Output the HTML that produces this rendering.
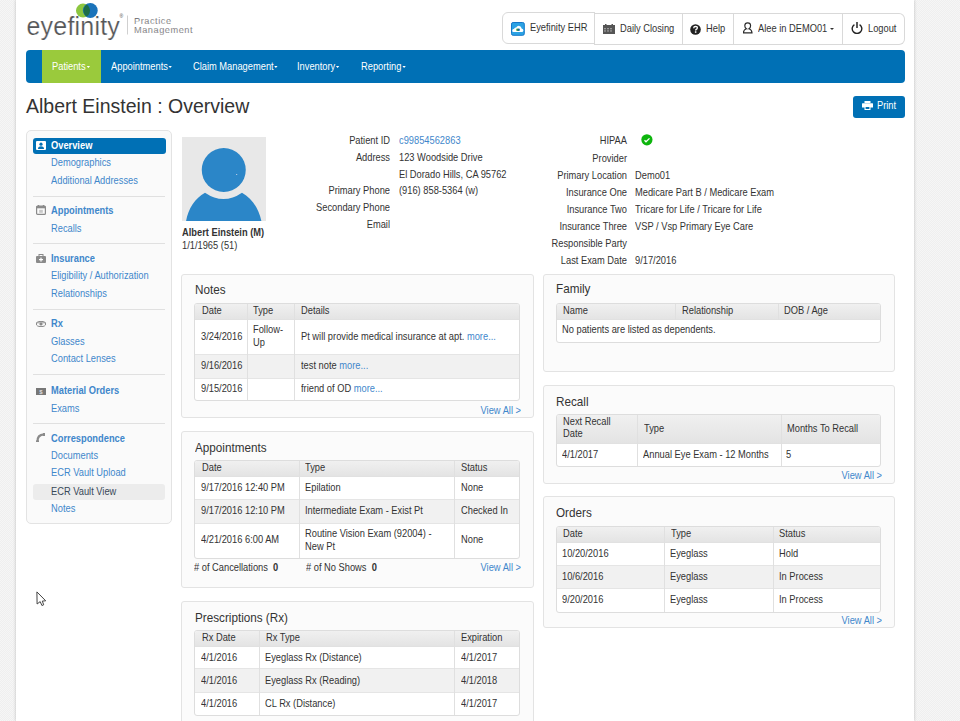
<!DOCTYPE html>
<html><head><meta charset="utf-8">
<style>
*{box-sizing:border-box}
html,body{margin:0;padding:0}
body{width:960px;height:721px;overflow:hidden;position:relative;font-family:"Liberation Sans",sans-serif;color:#333;font-size:9.3px;
background:repeating-conic-gradient(#efefef 0 25%,#f6f6f6 0 50%) 0 0/2px 2px;}
.abs{position:absolute}
.t0{position:absolute;white-space:nowrap;line-height:10px}
.tbt{font-size:11px;line-height:10px;color:#333;white-space:nowrap;transform:scaleX(0.8455);transform-origin:left}
.page{position:absolute;left:16px;top:0;width:898px;height:721px;background:#fff;box-shadow:0 0 3px rgba(0,0,0,.22)}
a,.lnk{color:#4583c4;text-decoration:none}

/* top buttons */
.tb{position:absolute;top:12px;height:32px;border:1px solid #d6d6d6;background:#fff;display:flex;align-items:center;font-size:10px;color:#333;white-space:nowrap}
/* navbar */
.nav{position:absolute;left:26px;top:50px;width:879px;height:33px;background:#0070b5;border-radius:4px;overflow:hidden}
.nav span{position:absolute;top:11px;line-height:10px;color:#fff;font-size:11px;white-space:nowrap;transform:scaleX(0.8455);transform-origin:left}
.caret{display:inline-block;width:0;height:0;border-left:2.5px solid transparent;border-right:2.5px solid transparent;border-top:2.5px solid currentColor;vertical-align:middle;margin-left:1px}

h1{position:absolute;left:26px;top:95px;margin:0;font-weight:normal;font-size:19.5px;color:#333;white-space:nowrap}
.print{position:absolute;left:853px;top:96px;width:52px;height:22px;background:#0070b5;border-radius:3px;color:#fff;font-size:9.3px}

.side{position:absolute;left:26px;top:130px;width:146px;height:392px;border:1px solid #e3e3e3;border-radius:5px;background:#fafafa}
.side div{position:absolute;white-space:nowrap}
.side .h{font-weight:bold;color:#3a7fc1;font-size:9.3px}
.side .s{color:#3a7fc1;font-size:9.3px}
.side .hr{height:1px;background:#e0e0e0;left:7px;width:131px}

.lbl{position:absolute;text-align:right;white-space:nowrap;color:#333}
.val{position:absolute;white-space:nowrap;color:#333}

.panel{position:absolute;border:1px solid #e3e3e3;border-radius:4px;background:#fafafa}
.panel .t{position:absolute;left:13px;font-size:11px;color:#333;white-space:nowrap}
table{border-collapse:separate;border-spacing:0;position:absolute;font-size:9.3px;color:#333;background:#fff;border:1px solid #ddd;border-radius:3px}
</style></head><body>
<div class="page"></div>

<!-- logo -->
<svg class="abs" style="left:0;top:0" width="220" height="48">
 <circle cx="83" cy="10.6" r="7" fill="#8cc63f"/>
 <circle cx="90.3" cy="10.5" r="7.4" fill="#1a73ba"/>
 <path d="M86.6,4.6 A7,7 0 0 1 86.6,16.6 A7.4,7.4 0 0 1 86.6,4.6Z" fill="#1d6e47"/>
 <line x1="127.5" y1="15.5" x2="127.5" y2="34.5" stroke="#d0d0d0" stroke-width="1"/>
</svg>
<div class="abs" style="left:26.5px;top:11.5px;font-size:25px;color:#555658;letter-spacing:0.2px;-webkit-text-stroke:0.2px #fff;white-space:nowrap">eyefinity</div>
<div class="abs" style="left:119.5px;top:13px;font-size:5px;color:#444">&reg;</div>
<div class="abs" style="left:134px;top:16.5px;font-size:9.2px;line-height:9.5px;color:#606062;letter-spacing:0.55px;-webkit-text-stroke:0.15px #fff;white-space:nowrap">Practice<br>Management</div>

<!-- top buttons -->
<div class="abs" style="left:502px;top:12px;width:93px;height:32px;border:1px solid #d9d9d9;border-radius:6px 0 0 6px;background:#fff"></div>
<div class="abs" style="left:594px;top:13px;width:311px;height:32px;border:1px solid #d9d9d9;border-left:none;border-radius:0 6px 6px 0;background:#fff"></div>
<div class="abs" style="left:594px;top:12px;width:1px;height:33px;background:#d9d9d9"></div>
<div class="abs" style="left:682px;top:13px;width:1px;height:32px;background:#d9d9d9"></div>
<div class="abs" style="left:733px;top:13px;width:1px;height:32px;background:#d9d9d9"></div>
<div class="abs" style="left:842px;top:13px;width:1px;height:32px;background:#d9d9d9"></div>
<svg class="abs" style="left:510.5px;top:21.5px" width="14" height="14" viewBox="0 0 14 14">
 <rect x="0.5" y="0.5" width="12.8" height="12.8" rx="1.6" fill="#2ba2e4" stroke="#1577c9" stroke-width="1"/>
 <path d="M2.6,10 Q1,9.9 1.2,8.4 Q1.5,7 3,7.1 Q3.4,5.2 5.2,5.4 Q6.2,3.6 8.4,3.9 Q10.3,4.2 10.6,6.5 Q12.5,6.8 12.4,8.5 Q12.2,10 10.9,10Z" fill="#fff"/>
 <circle cx="6.3" cy="7.8" r="1.3" fill="#6cc04a"/><circle cx="7.7" cy="7.8" r="1.3" fill="#1c74c4"/>
 <path d="M7,6.7 A1.3,1.3 0 0 1 7,8.9 A1.3,1.3 0 0 1 7,6.7Z" fill="#1a6a3a"/>
</svg>
<div class="abs tbt" style="left:529.5px;top:21.5px">Eyefinity EHR</div>
<svg class="abs" style="left:603px;top:24px" width="12" height="10" viewBox="0 0 12 10">
 <rect x="0" y="1" width="12" height="9" fill="#555"/>
 <rect x="2" y="0" width="1.5" height="2" fill="#555"/><rect x="8.5" y="0" width="1.5" height="2" fill="#555"/>
 <g fill="#999"><rect x="1" y="4" width="2" height="1.3"/><rect x="4" y="4" width="2" height="1.3"/><rect x="7" y="4" width="2" height="1.3"/><rect x="1" y="6.3" width="2" height="1.3"/><rect x="4" y="6.3" width="2" height="1.3"/><rect x="7" y="6.3" width="2" height="1.3"/></g>
</svg>
<div class="abs tbt" style="left:620px;top:23px">Daily Closing</div>
<svg class="abs" style="left:690px;top:23.5px" width="11" height="11" viewBox="0 0 11 11">
 <circle cx="5.5" cy="5.5" r="5.3" fill="#222"/>
 <path d="M3.7,4.2 Q3.8,2.4 5.6,2.4 Q7.4,2.5 7.3,4 Q7.2,4.9 6.2,5.4 Q5.7,5.7 5.7,6.5" stroke="#fff" stroke-width="1.4" fill="none"/>
 <rect x="4.9" y="7.3" width="1.5" height="1.5" fill="#fff"/>
</svg>
<div class="abs tbt" style="left:706px;top:23px">Help</div>
<svg class="abs" style="left:743px;top:22px" width="10" height="12" viewBox="0 0 10 12">
 <path d="M4.7,0.8 C6.5,0.8 7.6,2.1 7.6,3.7 C7.6,5.2 6.9,6.2 6,6.8 C7.9,7.4 8.9,8.8 9,10.8 L0.4,10.8 C0.5,8.8 1.5,7.4 3.4,6.8 C2.5,6.2 1.8,5.2 1.8,3.7 C1.8,2.1 2.9,0.8 4.7,0.8Z" fill="none" stroke="#2a2a2a" stroke-width="1.15"/>
</svg>
<div class="abs tbt" style="left:758px;top:23px">Alee in DEMO01</div>
<div class="abs" style="left:829.5px;top:28px;width:0;height:0;border-left:2.5px solid transparent;border-right:2.5px solid transparent;border-top:2.8px solid #333"></div>
<svg class="abs" style="left:850.5px;top:21px" width="12" height="13" viewBox="0 0 12 13">
 <path d="M3.4,3.6 A4.8,4.8 0 1 0 8.6,3.6" fill="none" stroke="#222" stroke-width="1.4"/>
 <line x1="6" y1="0.9" x2="6" y2="6.9" stroke="#222" stroke-width="1.5"/>
</svg>
<div class="abs tbt" style="left:867.5px;top:23px">Logout</div>

<!-- navbar -->
<div class="nav">
 <div class="abs" style="left:16px;top:0;width:59px;height:33px;background:#9aca3c"></div>
 <span style="left:26px">Patients<i class="caret"></i></span>
 <span style="left:84.5px">Appointments<i class="caret"></i></span>
 <span style="left:166.5px">Claim Management<i class="caret"></i></span>
 <span style="left:271px">Inventory<i class="caret"></i></span>
 <span style="left:334.5px">Reporting<i class="caret"></i></span>
</div>

<h1>Albert Einstein : Overview</h1>
<div class="print">
 <svg class="abs" style="left:8.5px;top:5px" width="11" height="9" viewBox="0 0 11 9">
  <rect x="2.5" y="0" width="6" height="2" fill="#fff"/>
  <path d="M0,2.8 Q0,2.3 0.5,2.3 L10.5,2.3 Q11,2.3 11,2.8 L11,6.5 L0,6.5Z" fill="#fff"/>
  <rect x="2.5" y="5" width="6" height="4" fill="#fff"/>
  <rect x="3.6" y="6" width="3.8" height="2" fill="#0070b5"/>
 </svg>
 <div class="abs" style="left:24px;top:4px;font-size:11px;line-height:10px;color:#fff;transform:scaleX(0.8455);transform-origin:left">Print</div>
</div>

<div class="abs" style="left:26px;top:130px;width:146px;height:394px;border:1px solid #e3e3e3;border-radius:5px;background:#fafafa"></div>
<div class="abs" style="left:33px;top:137.5px;width:132.5px;height:16.0px;background:#0070b5;border-radius:3px"></div>
<svg class="abs" style="left:36px;top:141px" width="10" height="9" viewBox="0 0 10 9"><rect x="0" y="0" width="10" height="9" rx="1" fill="#fff"/><circle cx="5" cy="3.2" r="1.6" fill="#0070b5"/><path d="M2,8 Q2,5.2 5,5.2 Q8,5.2 8,8Z" fill="#0070b5"/></svg>
<div class="t0" style="left:51px;top:139.7px;font-size:11px;font-weight:700;color:#fff;transform:scaleX(0.8455);transform-origin:left;">Overview</div>
<div class="t0" style="left:51px;top:157px;font-size:11px;font-weight:400;color:#3f87cb;transform:scaleX(0.8455);transform-origin:left;">Demographics</div>
<div class="t0" style="left:51px;top:174.9px;font-size:11px;font-weight:400;color:#3f87cb;transform:scaleX(0.8455);transform-origin:left;">Additional Addresses</div>
<div class="abs" style="left:33px;top:196px;width:132px;height:1px;background:#e0e0e0"></div>
<svg class="abs" style="left:36px;top:205px" width="10" height="10" viewBox="0 0 10 10"><rect x="0.6" y="1.1" width="8.8" height="8.3" rx="1" fill="none" stroke="#8a8a8a" stroke-width="1.2"/><rect x="0.6" y="1.1" width="8.8" height="2.2" fill="#8a8a8a"/><rect x="1.8" y="0" width="1.4" height="2" fill="#8a8a8a"/><rect x="6.8" y="0" width="1.4" height="2" fill="#8a8a8a"/><rect x="3.2" y="4.8" width="3.6" height="3" fill="#c8c8c8"/></svg>
<div class="t0" style="left:51px;top:204.7px;font-size:11px;font-weight:700;color:#3f87cb;transform:scaleX(0.8455);transform-origin:left;">Appointments</div>
<div class="t0" style="left:51px;top:222.7px;font-size:11px;font-weight:400;color:#3f87cb;transform:scaleX(0.8455);transform-origin:left;">Recalls</div>
<div class="abs" style="left:33px;top:243px;width:132px;height:1px;background:#e0e0e0"></div>
<svg class="abs" style="left:36px;top:253.5px" width="10" height="9" viewBox="0 0 10 9"><rect x="3" y="0.5" width="4" height="2.5" fill="none" stroke="#8a8a8a" stroke-width="1"/><rect x="0" y="2" width="10" height="7" rx="1" fill="#8a8a8a"/><rect x="4.4" y="3.6" width="1.2" height="4" fill="#fff"/><rect x="3" y="5" width="4" height="1.2" fill="#fff"/></svg>
<div class="t0" style="left:51px;top:252.7px;font-size:11px;font-weight:700;color:#3f87cb;transform:scaleX(0.8455);transform-origin:left;">Insurance</div>
<div class="t0" style="left:51px;top:270.2px;font-size:11px;font-weight:400;color:#3f87cb;transform:scaleX(0.8455);transform-origin:left;">Eligibility / Authorization</div>
<div class="t0" style="left:51px;top:288px;font-size:11px;font-weight:400;color:#3f87cb;transform:scaleX(0.8455);transform-origin:left;">Relationships</div>
<div class="abs" style="left:33px;top:308.5px;width:132px;height:1.0px;background:#e0e0e0"></div>
<svg class="abs" style="left:36px;top:320.5px" width="10" height="6" viewBox="0 0 10 6"><ellipse cx="5" cy="3" rx="4.6" ry="2.6" fill="none" stroke="#8a8a8a" stroke-width="1"/><circle cx="5" cy="3" r="1.6" fill="#8a8a8a"/><line x1="0" y1="1.8" x2="10" y2="1.8" stroke="#8a8a8a" stroke-width="0.8"/></svg>
<div class="t0" style="left:51px;top:318px;font-size:11px;font-weight:700;color:#3f87cb;transform:scaleX(0.8455);transform-origin:left;">Rx</div>
<div class="t0" style="left:51px;top:336px;font-size:11px;font-weight:400;color:#3f87cb;transform:scaleX(0.8455);transform-origin:left;">Glasses</div>
<div class="t0" style="left:51px;top:353.2px;font-size:11px;font-weight:400;color:#3f87cb;transform:scaleX(0.8455);transform-origin:left;">Contact Lenses</div>
<div class="abs" style="left:33px;top:374px;width:132px;height:1px;background:#e0e0e0"></div>
<svg class="abs" style="left:36px;top:387.5px" width="10" height="7" viewBox="0 0 10 7"><rect x="0" y="0" width="10" height="7" fill="#777"/><text x="5" y="6" font-size="6" fill="#ddd" text-anchor="middle" font-family="Liberation Sans" font-weight="bold">$</text></svg>
<div class="t0" style="left:51px;top:385.4px;font-size:11px;font-weight:700;color:#3f87cb;transform:scaleX(0.8455);transform-origin:left;">Material Orders</div>
<div class="t0" style="left:51px;top:403px;font-size:11px;font-weight:400;color:#3f87cb;transform:scaleX(0.8455);transform-origin:left;">Exams</div>
<div class="abs" style="left:33px;top:422.5px;width:132px;height:1.0px;background:#e0e0e0"></div>
<svg class="abs" style="left:36px;top:432.7px" width="9" height="9" viewBox="0 0 9 9"><path d="M1.5,8.6 Q1.2,1.8 8,1.4" fill="none" stroke="#8a8a8a" stroke-width="2.2"/><rect x="0" y="7.4" width="3" height="2" fill="#8a8a8a"/><rect x="7" y="0" width="2" height="3" fill="#8a8a8a"/></svg>
<div class="t0" style="left:51px;top:432.7px;font-size:11px;font-weight:700;color:#3f87cb;transform:scaleX(0.8455);transform-origin:left;">Correspondence</div>
<div class="t0" style="left:51px;top:450.2px;font-size:11px;font-weight:400;color:#3f87cb;transform:scaleX(0.8455);transform-origin:left;">Documents</div>
<div class="t0" style="left:51px;top:467.2px;font-size:11px;font-weight:400;color:#3f87cb;transform:scaleX(0.8455);transform-origin:left;">ECR Vault Upload</div>
<div class="abs" style="left:33px;top:484px;width:132px;height:15.699999999999989px;background:#ececec;border-radius:3px"></div>
<div class="t0" style="left:51px;top:486px;font-size:11px;font-weight:400;color:#384858;transform:scaleX(0.8455);transform-origin:left;">ECR Vault View</div>
<div class="t0" style="left:51px;top:503px;font-size:11px;font-weight:400;color:#3f87cb;transform:scaleX(0.8455);transform-origin:left;">Notes</div>
<svg class="abs" style="left:182px;top:137px" width="84" height="84" viewBox="0 0 84 84"><rect width="84" height="84" fill="#e8e8e8"/><circle cx="41.75" cy="33" r="22" fill="#2b86c8"/><path d="M4,84.5 C6,72 13,61 23,55.7 Q41.5,68.3 60,55.7 C70,61 77,72 79.5,84.5Z" fill="#2b86c8"/><circle cx="54.7" cy="37.5" r="0.6" fill="#dde"/></svg>
<div class="t0" style="left:182px;top:227.4px;font-size:11px;font-weight:700;color:#333;transform:scaleX(0.8455);transform-origin:left;">Albert Einstein (M)</div>
<div class="t0" style="left:182px;top:239.7px;font-size:11px;font-weight:400;color:#333;transform:scaleX(0.8455);transform-origin:left;">1/1/1965 (51)</div>
<div class="t0" style="left:-10.5px;width:400px;text-align:right;top:135.0px;font-size:11px;font-weight:400;color:#333;transform:scaleX(0.8455);transform-origin:right;">Patient ID</div>
<div class="t0" style="left:399px;top:135.0px;font-size:11px;font-weight:400;color:#333;transform:scaleX(0.8455);transform-origin:left;"><span style="color:#3f87cb">c99854562863</span></div>
<div class="t0" style="left:-10.5px;width:400px;text-align:right;top:151.75px;font-size:11px;font-weight:400;color:#333;transform:scaleX(0.8455);transform-origin:right;">Address</div>
<div class="t0" style="left:399px;top:151.75px;font-size:11px;font-weight:400;color:#333;transform:scaleX(0.8455);transform-origin:left;">123 Woodside Drive</div>
<div class="t0" style="left:399px;top:168.5px;font-size:11px;font-weight:400;color:#333;transform:scaleX(0.8455);transform-origin:left;">El Dorado Hills, CA 95762</div>
<div class="t0" style="left:-10.5px;width:400px;text-align:right;top:185.25px;font-size:11px;font-weight:400;color:#333;transform:scaleX(0.8455);transform-origin:right;">Primary Phone</div>
<div class="t0" style="left:399px;top:185.25px;font-size:11px;font-weight:400;color:#333;transform:scaleX(0.8455);transform-origin:left;">(916) 858-5364 (w)</div>
<div class="t0" style="left:-10.5px;width:400px;text-align:right;top:202.0px;font-size:11px;font-weight:400;color:#333;transform:scaleX(0.8455);transform-origin:right;">Secondary Phone</div>
<div class="t0" style="left:-10.5px;width:400px;text-align:right;top:218.75px;font-size:11px;font-weight:400;color:#333;transform:scaleX(0.8455);transform-origin:right;">Email</div>
<div class="t0" style="left:226.5px;width:400px;text-align:right;top:134.8px;font-size:11px;font-weight:400;color:#333;transform:scaleX(0.8455);transform-origin:right;">HIPAA</div>
<div class="t0" style="left:226.5px;width:400px;text-align:right;top:153px;font-size:11px;font-weight:400;color:#333;transform:scaleX(0.8455);transform-origin:right;">Provider</div>
<div class="t0" style="left:226.5px;width:400px;text-align:right;top:170.2px;font-size:11px;font-weight:400;color:#333;transform:scaleX(0.8455);transform-origin:right;">Primary Location</div>
<div class="t0" style="left:635.2px;top:170.2px;font-size:11px;font-weight:400;color:#333;transform:scaleX(0.8455);transform-origin:left;">Demo01</div>
<div class="t0" style="left:226.5px;width:400px;text-align:right;top:187.3px;font-size:11px;font-weight:400;color:#333;transform:scaleX(0.8455);transform-origin:right;">Insurance One</div>
<div class="t0" style="left:635.2px;top:187.3px;font-size:11px;font-weight:400;color:#333;transform:scaleX(0.8455);transform-origin:left;">Medicare Part B / Medicare Exam</div>
<div class="t0" style="left:226.5px;width:400px;text-align:right;top:203.9px;font-size:11px;font-weight:400;color:#333;transform:scaleX(0.8455);transform-origin:right;">Insurance Two</div>
<div class="t0" style="left:635.2px;top:203.9px;font-size:11px;font-weight:400;color:#333;transform:scaleX(0.8455);transform-origin:left;">Tricare for Life / Tricare for Life</div>
<div class="t0" style="left:226.5px;width:400px;text-align:right;top:220.8px;font-size:11px;font-weight:400;color:#333;transform:scaleX(0.8455);transform-origin:right;">Insurance Three</div>
<div class="t0" style="left:635.2px;top:220.8px;font-size:11px;font-weight:400;color:#333;transform:scaleX(0.8455);transform-origin:left;">VSP / Vsp Primary Eye Care</div>
<div class="t0" style="left:226.5px;width:400px;text-align:right;top:237.8px;font-size:11px;font-weight:400;color:#333;transform:scaleX(0.8455);transform-origin:right;">Responsible Party</div>
<div class="t0" style="left:226.5px;width:400px;text-align:right;top:254.8px;font-size:11px;font-weight:400;color:#333;transform:scaleX(0.8455);transform-origin:right;">Last Exam Date</div>
<div class="t0" style="left:635.2px;top:254.8px;font-size:11px;font-weight:400;color:#333;transform:scaleX(0.8455);transform-origin:left;">9/17/2016</div>
<svg class="abs" style="left:640.5px;top:134px" width="12" height="12" viewBox="0 0 12 12"><circle cx="5.9" cy="5.8" r="5.6" fill="#0db50d"/><path d="M3.5,6.2 L5,7.8 L8.5,4.4" fill="none" stroke="#fff" stroke-width="1.3"/></svg>
<div class="abs" style="left:181px;top:274px;width:353px;height:144px;border:1px solid #e3e3e3;border-radius:3px;background:#fbfbfb"></div>
<div class="t0" style="left:195px;top:285px;font-size:12.4px;font-weight:400;color:#333;transform:scaleX(0.944);transform-origin:left;">Notes</div>
<div class="abs" style="left:194px;top:303px;width:326px;height:98px;border:1px solid #ddd;border-radius:3px;background:#fff;overflow:hidden"></div>
<div class="abs" style="left:195px;top:304px;width:324px;height:16px;background:linear-gradient(#f0f0f0,#e3e3e3);border-radius:2px 2px 0 0"></div>
<div class="abs" style="left:195px;top:353.5px;width:324px;height:1.0px;background:#e5e5e5"></div>
<div class="abs" style="left:195px;top:354.5px;width:324px;height:24.0px;background:#f1f1f1"></div>
<div class="abs" style="left:195px;top:377.5px;width:324px;height:1.0px;background:#e5e5e5"></div>
<div class="abs" style="left:195px;top:319px;width:324px;height:1px;background:#e1e1e1"></div>
<div class="abs" style="left:247px;top:304px;width:1px;height:96px;background:#e0e0e0"></div>
<div class="abs" style="left:294px;top:304px;width:1px;height:96px;background:#e0e0e0"></div>
<div class="t0" style="left:201.5px;top:305px;font-size:11px;font-weight:400;color:#333;transform:scaleX(0.8455);transform-origin:left;">Date</div>
<div class="t0" style="left:253px;top:305px;font-size:11px;font-weight:400;color:#333;transform:scaleX(0.8455);transform-origin:left;">Type</div>
<div class="t0" style="left:300.5px;top:305px;font-size:11px;font-weight:400;color:#333;transform:scaleX(0.8455);transform-origin:left;">Details</div>
<div class="t0" style="left:200.5px;top:330.6px;font-size:11px;font-weight:400;color:#333;transform:scaleX(0.8455);transform-origin:left;">3/24/2016</div>
<div class="t0" style="left:253px;top:324.3px;font-size:11px;font-weight:400;color:#333;transform:scaleX(0.8455);transform-origin:left;">Follow-</div>
<div class="t0" style="left:253px;top:336.8px;font-size:11px;font-weight:400;color:#333;transform:scaleX(0.8455);transform-origin:left;">Up</div>
<div class="t0" style="left:300.5px;top:330.6px;font-size:11px;font-weight:400;color:#333;transform:scaleX(0.8455);transform-origin:left;">Pt will provide medical insurance at apt. <span style="color:#3f87cb">more...</span></div>
<div class="t0" style="left:200.5px;top:360px;font-size:11px;font-weight:400;color:#333;transform:scaleX(0.8455);transform-origin:left;">9/16/2016</div>
<div class="t0" style="left:300.5px;top:360px;font-size:11px;font-weight:400;color:#333;transform:scaleX(0.8455);transform-origin:left;">test note <span style="color:#3f87cb">more...</span></div>
<div class="t0" style="left:200.5px;top:383.4px;font-size:11px;font-weight:400;color:#333;transform:scaleX(0.8455);transform-origin:left;">9/15/2016</div>
<div class="t0" style="left:300.5px;top:383.4px;font-size:11px;font-weight:400;color:#333;transform:scaleX(0.8455);transform-origin:left;">friend of OD <span style="color:#3f87cb">more...</span></div>
<div class="t0" style="left:121px;width:400px;text-align:right;top:404.7px;font-size:11px;font-weight:400;color:#3f87cb;transform:scaleX(0.8455);transform-origin:right;">View All &gt;</div>
<div class="abs" style="left:181px;top:431px;width:353px;height:157px;border:1px solid #e3e3e3;border-radius:3px;background:#fbfbfb"></div>
<div class="t0" style="left:195px;top:442.6px;font-size:12.4px;font-weight:400;color:#333;transform:scaleX(0.944);transform-origin:left;">Appointments</div>
<div class="abs" style="left:194px;top:460px;width:326px;height:99px;border:1px solid #ddd;border-radius:3px;background:#fff;overflow:hidden"></div>
<div class="abs" style="left:195px;top:461px;width:324px;height:16px;background:linear-gradient(#f0f0f0,#e3e3e3);border-radius:2px 2px 0 0"></div>
<div class="abs" style="left:195px;top:499px;width:324px;height:1px;background:#e5e5e5"></div>
<div class="abs" style="left:195px;top:500px;width:324px;height:24px;background:#f1f1f1"></div>
<div class="abs" style="left:195px;top:523px;width:324px;height:1px;background:#e5e5e5"></div>
<div class="abs" style="left:195px;top:476px;width:324px;height:1px;background:#e1e1e1"></div>
<div class="abs" style="left:299px;top:461px;width:1px;height:97px;background:#e0e0e0"></div>
<div class="abs" style="left:454px;top:461px;width:1px;height:97px;background:#e0e0e0"></div>
<div class="t0" style="left:201.5px;top:461.6px;font-size:11px;font-weight:400;color:#333;transform:scaleX(0.8455);transform-origin:left;">Date</div>
<div class="t0" style="left:305px;top:461.6px;font-size:11px;font-weight:400;color:#333;transform:scaleX(0.8455);transform-origin:left;">Type</div>
<div class="t0" style="left:461px;top:461.6px;font-size:11px;font-weight:400;color:#333;transform:scaleX(0.8455);transform-origin:left;">Status</div>
<div class="t0" style="left:200.5px;top:482px;font-size:11px;font-weight:400;color:#333;transform:scaleX(0.8455);transform-origin:left;">9/17/2016 12:40 PM</div>
<div class="t0" style="left:304.7px;top:482px;font-size:11px;font-weight:400;color:#333;transform:scaleX(0.8455);transform-origin:left;">Epilation</div>
<div class="t0" style="left:461px;top:482px;font-size:11px;font-weight:400;color:#333;transform:scaleX(0.8455);transform-origin:left;">None</div>
<div class="t0" style="left:200.5px;top:504.6px;font-size:11px;font-weight:400;color:#333;transform:scaleX(0.8455);transform-origin:left;">9/17/2016 12:10 PM</div>
<div class="t0" style="left:304.7px;top:504.6px;font-size:11px;font-weight:400;color:#333;transform:scaleX(0.8455);transform-origin:left;">Intermediate Exam - Exist Pt</div>
<div class="t0" style="left:461px;top:504.6px;font-size:11px;font-weight:400;color:#333;transform:scaleX(0.8455);transform-origin:left;">Checked In</div>
<div class="t0" style="left:200.5px;top:533.9px;font-size:11px;font-weight:400;color:#333;transform:scaleX(0.8455);transform-origin:left;">4/21/2016 6:00 AM</div>
<div class="t0" style="left:304.7px;top:528px;font-size:11px;font-weight:400;color:#333;transform:scaleX(0.8455);transform-origin:left;">Routine Vision Exam (92004) -</div>
<div class="t0" style="left:304.7px;top:540.7px;font-size:11px;font-weight:400;color:#333;transform:scaleX(0.8455);transform-origin:left;">New Pt</div>
<div class="t0" style="left:461px;top:533.9px;font-size:11px;font-weight:400;color:#333;transform:scaleX(0.8455);transform-origin:left;">None</div>
<div class="t0" style="left:194px;top:562.4px;font-size:11px;font-weight:400;color:#333;transform:scaleX(0.8455);transform-origin:left;"># of Cancellations&nbsp;&nbsp;<b>0</b></div>
<div class="t0" style="left:306px;top:562.4px;font-size:11px;font-weight:400;color:#333;transform:scaleX(0.8455);transform-origin:left;"># of No Shows&nbsp;&nbsp;<b>0</b></div>
<div class="t0" style="left:121px;width:400px;text-align:right;top:562.4px;font-size:11px;font-weight:400;color:#3f87cb;transform:scaleX(0.8455);transform-origin:right;">View All &gt;</div>
<div class="abs" style="left:181px;top:601px;width:353px;height:139px;border:1px solid #e3e3e3;border-radius:3px;background:#fbfbfb"></div>
<div class="t0" style="left:195px;top:612.6px;font-size:12.4px;font-weight:400;color:#333;transform:scaleX(0.944);transform-origin:left;">Prescriptions (Rx)</div>
<div class="abs" style="left:194px;top:630px;width:326px;height:86px;border:1px solid #ddd;border-radius:3px;background:#fff;overflow:hidden"></div>
<div class="abs" style="left:195px;top:631px;width:324px;height:16px;background:linear-gradient(#f0f0f0,#e3e3e3);border-radius:2px 2px 0 0"></div>
<div class="abs" style="left:195px;top:668px;width:324px;height:1px;background:#e5e5e5"></div>
<div class="abs" style="left:195px;top:669px;width:324px;height:24px;background:#f1f1f1"></div>
<div class="abs" style="left:195px;top:692px;width:324px;height:1px;background:#e5e5e5"></div>
<div class="abs" style="left:195px;top:646px;width:324px;height:1px;background:#e1e1e1"></div>
<div class="abs" style="left:259px;top:631px;width:1px;height:84px;background:#e0e0e0"></div>
<div class="abs" style="left:454px;top:631px;width:1px;height:84px;background:#e0e0e0"></div>
<div class="t0" style="left:201.5px;top:631.6px;font-size:11px;font-weight:400;color:#333;transform:scaleX(0.8455);transform-origin:left;">Rx Date</div>
<div class="t0" style="left:265.5px;top:631.6px;font-size:11px;font-weight:400;color:#333;transform:scaleX(0.8455);transform-origin:left;">Rx Type</div>
<div class="t0" style="left:461px;top:631.6px;font-size:11px;font-weight:400;color:#333;transform:scaleX(0.8455);transform-origin:left;">Expiration</div>
<div class="t0" style="left:200.5px;top:652px;font-size:11px;font-weight:400;color:#333;transform:scaleX(0.8455);transform-origin:left;">4/1/2016</div>
<div class="t0" style="left:265px;top:652px;font-size:11px;font-weight:400;color:#333;transform:scaleX(0.8455);transform-origin:left;">Eyeglass Rx (Distance)</div>
<div class="t0" style="left:461px;top:652px;font-size:11px;font-weight:400;color:#333;transform:scaleX(0.8455);transform-origin:left;">4/1/2017</div>
<div class="t0" style="left:200.5px;top:674.6px;font-size:11px;font-weight:400;color:#333;transform:scaleX(0.8455);transform-origin:left;">4/1/2016</div>
<div class="t0" style="left:265px;top:674.6px;font-size:11px;font-weight:400;color:#333;transform:scaleX(0.8455);transform-origin:left;">Eyeglass Rx (Reading)</div>
<div class="t0" style="left:461px;top:674.6px;font-size:11px;font-weight:400;color:#333;transform:scaleX(0.8455);transform-origin:left;">4/1/2018</div>
<div class="t0" style="left:200.5px;top:698px;font-size:11px;font-weight:400;color:#333;transform:scaleX(0.8455);transform-origin:left;">4/1/2016</div>
<div class="t0" style="left:265px;top:698px;font-size:11px;font-weight:400;color:#333;transform:scaleX(0.8455);transform-origin:left;">CL Rx (Distance)</div>
<div class="t0" style="left:461px;top:698px;font-size:11px;font-weight:400;color:#333;transform:scaleX(0.8455);transform-origin:left;">4/1/2017</div>
<div class="abs" style="left:543px;top:274px;width:352px;height:98px;border:1px solid #e3e3e3;border-radius:3px;background:#fbfbfb"></div>
<div class="t0" style="left:556px;top:284.4px;font-size:12.4px;font-weight:400;color:#333;transform:scaleX(0.944);transform-origin:left;">Family</div>
<div class="abs" style="left:556px;top:303px;width:325px;height:39.5px;border:1px solid #ddd;border-radius:3px;background:#fff;overflow:hidden"></div>
<div class="abs" style="left:557px;top:304px;width:323px;height:15.5px;background:linear-gradient(#f0f0f0,#e3e3e3);border-radius:2px 2px 0 0"></div>
<div class="abs" style="left:557px;top:318.5px;width:323px;height:1.0px;background:#e1e1e1"></div>
<div class="abs" style="left:674.5px;top:304px;width:1.0px;height:15.5px;background:#e0e0e0"></div>
<div class="abs" style="left:777.5px;top:304px;width:1.0px;height:15.5px;background:#e0e0e0"></div>
<div class="t0" style="left:563.3px;top:305px;font-size:11px;font-weight:400;color:#333;transform:scaleX(0.8455);transform-origin:left;">Name</div>
<div class="t0" style="left:681.7px;top:305px;font-size:11px;font-weight:400;color:#333;transform:scaleX(0.8455);transform-origin:left;">Relationship</div>
<div class="t0" style="left:784.2px;top:305px;font-size:11px;font-weight:400;color:#333;transform:scaleX(0.8455);transform-origin:left;">DOB / Age</div>
<div class="t0" style="left:561.8px;top:324px;font-size:11px;font-weight:400;color:#333;transform:scaleX(0.8455);transform-origin:left;">No patients are listed as dependents.</div>
<div class="abs" style="left:543px;top:385px;width:352px;height:99px;border:1px solid #e3e3e3;border-radius:3px;background:#fbfbfb"></div>
<div class="t0" style="left:556px;top:397px;font-size:12.4px;font-weight:400;color:#333;transform:scaleX(0.944);transform-origin:left;">Recall</div>
<div class="abs" style="left:556px;top:414px;width:325px;height:53px;border:1px solid #ddd;border-radius:3px;background:#fff;overflow:hidden"></div>
<div class="abs" style="left:557px;top:415px;width:323px;height:28.5px;background:linear-gradient(#f0f0f0,#e3e3e3);border-radius:2px 2px 0 0"></div>
<div class="abs" style="left:557px;top:442.5px;width:323px;height:1.0px;background:#e1e1e1"></div>
<div class="abs" style="left:636.5px;top:415px;width:1.0px;height:51px;background:#e0e0e0"></div>
<div class="abs" style="left:780.5px;top:415px;width:1.0px;height:51px;background:#e0e0e0"></div>
<div class="t0" style="left:563.3px;top:416px;font-size:11px;font-weight:400;color:#333;transform:scaleX(0.8455);transform-origin:left;">Next Recall</div>
<div class="t0" style="left:563.3px;top:428.4px;font-size:11px;font-weight:400;color:#333;transform:scaleX(0.8455);transform-origin:left;">Date</div>
<div class="t0" style="left:644px;top:422.8px;font-size:11px;font-weight:400;color:#333;transform:scaleX(0.8455);transform-origin:left;">Type</div>
<div class="t0" style="left:787.2px;top:422.8px;font-size:11px;font-weight:400;color:#333;transform:scaleX(0.8455);transform-origin:left;">Months To Recall</div>
<div class="t0" style="left:561.8px;top:448.8px;font-size:11px;font-weight:400;color:#333;transform:scaleX(0.8455);transform-origin:left;">4/1/2017</div>
<div class="t0" style="left:642.5px;top:448.8px;font-size:11px;font-weight:400;color:#333;transform:scaleX(0.8455);transform-origin:left;">Annual Eye Exam - 12 Months</div>
<div class="t0" style="left:785.7px;top:448.8px;font-size:11px;font-weight:400;color:#333;transform:scaleX(0.8455);transform-origin:left;">5</div>
<div class="t0" style="left:482px;width:400px;text-align:right;top:469.5px;font-size:11px;font-weight:400;color:#3f87cb;transform:scaleX(0.8455);transform-origin:right;">View All &gt;</div>
<div class="abs" style="left:543px;top:496px;width:352px;height:132px;border:1px solid #e3e3e3;border-radius:3px;background:#fbfbfb"></div>
<div class="t0" style="left:556px;top:508px;font-size:12.4px;font-weight:400;color:#333;transform:scaleX(0.944);transform-origin:left;">Orders</div>
<div class="abs" style="left:556px;top:526px;width:325px;height:87px;border:1px solid #ddd;border-radius:3px;background:#fff;overflow:hidden"></div>
<div class="abs" style="left:557px;top:527px;width:323px;height:15.5px;background:linear-gradient(#f0f0f0,#e3e3e3);border-radius:2px 2px 0 0"></div>
<div class="abs" style="left:557px;top:565px;width:323px;height:1px;background:#e5e5e5"></div>
<div class="abs" style="left:557px;top:566px;width:323px;height:23px;background:#f1f1f1"></div>
<div class="abs" style="left:557px;top:588px;width:323px;height:1px;background:#e5e5e5"></div>
<div class="abs" style="left:557px;top:541.5px;width:323px;height:1.0px;background:#e1e1e1"></div>
<div class="abs" style="left:663.5px;top:527px;width:1.0px;height:85px;background:#e0e0e0"></div>
<div class="abs" style="left:772.5px;top:527px;width:1.0px;height:85px;background:#e0e0e0"></div>
<div class="t0" style="left:563.3px;top:528px;font-size:11px;font-weight:400;color:#333;transform:scaleX(0.8455);transform-origin:left;">Date</div>
<div class="t0" style="left:670.7px;top:528px;font-size:11px;font-weight:400;color:#333;transform:scaleX(0.8455);transform-origin:left;">Type</div>
<div class="t0" style="left:779.3px;top:528px;font-size:11px;font-weight:400;color:#333;transform:scaleX(0.8455);transform-origin:left;">Status</div>
<div class="t0" style="left:561.8px;top:547.7px;font-size:11px;font-weight:400;color:#333;transform:scaleX(0.8455);transform-origin:left;">10/20/2016</div>
<div class="t0" style="left:670px;top:547.7px;font-size:11px;font-weight:400;color:#333;transform:scaleX(0.8455);transform-origin:left;">Eyeglass</div>
<div class="t0" style="left:779px;top:547.7px;font-size:11px;font-weight:400;color:#333;transform:scaleX(0.8455);transform-origin:left;">Hold</div>
<div class="t0" style="left:561.8px;top:571px;font-size:11px;font-weight:400;color:#333;transform:scaleX(0.8455);transform-origin:left;">10/6/2016</div>
<div class="t0" style="left:670px;top:571px;font-size:11px;font-weight:400;color:#333;transform:scaleX(0.8455);transform-origin:left;">Eyeglass</div>
<div class="t0" style="left:779px;top:571px;font-size:11px;font-weight:400;color:#333;transform:scaleX(0.8455);transform-origin:left;">In Process</div>
<div class="t0" style="left:561.8px;top:594px;font-size:11px;font-weight:400;color:#333;transform:scaleX(0.8455);transform-origin:left;">9/20/2016</div>
<div class="t0" style="left:670px;top:594px;font-size:11px;font-weight:400;color:#333;transform:scaleX(0.8455);transform-origin:left;">Eyeglass</div>
<div class="t0" style="left:779px;top:594px;font-size:11px;font-weight:400;color:#333;transform:scaleX(0.8455);transform-origin:left;">In Process</div>
<div class="t0" style="left:482px;width:400px;text-align:right;top:615.2px;font-size:11px;font-weight:400;color:#3f87cb;transform:scaleX(0.8455);transform-origin:right;">View All &gt;</div>
<svg class="abs" style="left:35.5px;top:590.5px" width="11" height="16" viewBox="0 0 11 16"><path d="M0.9,0.9 L1.1,13 L4.2,10.6 L5.9,14.5 L7.7,13.8 L6.3,10.1 L9.7,9.8 Z" fill="#fff" stroke="#444" stroke-width="1" stroke-linejoin="round"/></svg>
</body></html>
